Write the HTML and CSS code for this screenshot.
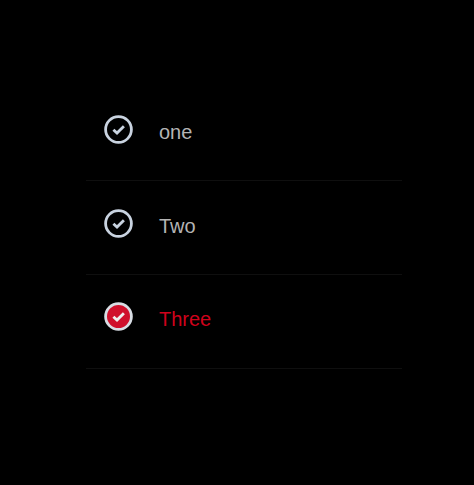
FILE: index.html
```html
<!DOCTYPE html>
<html lang="en">
<head>
  <meta charset="UTF-8" />
  <title>Checklist</title>
  <link rel="stylesheet" href="styles.css">
</head>
<body>
  <ul class="list">
    <li class="item">
      <svg class="check" viewBox="0 0 29 29"><circle cx="14.5" cy="14.5" r="12.9" fill="none" stroke="#c9d3e0" stroke-width="2.8"/><path d="M9.4 14.7l3.6 3.4 6.9-6.9" fill="none" stroke="#c9d3e0" stroke-width="2.8"/></svg>
      <span class="label">one</span>
    </li>
    <li class="item">
      <svg class="check" viewBox="0 0 29 29"><circle cx="14.5" cy="14.5" r="12.9" fill="none" stroke="#c9d3e0" stroke-width="2.8"/><path d="M9.4 14.7l3.6 3.4 6.9-6.9" fill="none" stroke="#c9d3e0" stroke-width="2.8"/></svg>
      <span class="label">Two</span>
    </li>
    <li class="item active">
      <svg class="check" viewBox="0 0 29 29"><circle cx="14.5" cy="14.5" r="12.9" fill="#d0102c" stroke="#d8dde4" stroke-width="2.8"/><path d="M9.4 14.7l3.6 3.4 6.9-6.9" fill="none" stroke="#eeeeee" stroke-width="2.8"/></svg>
      <span class="label">Three</span>
    </li>
  </ul>
</body>
</html>
```

FILE: styles.css
```css
body {
  margin: 0;
  min-height: 485px;
  background-color: #000;
  font-family: "Liberation Sans", Arial, sans-serif;
}

.list {
  list-style: none;
  width: 316px;
  margin: 0;
  padding: 87px 0 0 86px;
}

.item {
  display: flex;
  align-items: flex-start;
  gap: 26px;
  height: 93px;
  padding-left: 18px;
  border-bottom: 1px solid #0f0f0f;
}

.check {
  width: 29px;
  height: 29px;
  margin-top: 28px;
  flex-shrink: 0;
}

.label {
  margin-top: 33px;
  font-size: 20px;
  line-height: 24px;
  color: #b4b4b4;
}

.active .check {
  margin-top: 27px;
}

.active .label {
  margin-top: 32px;
  color: #d0021b;
}
```
